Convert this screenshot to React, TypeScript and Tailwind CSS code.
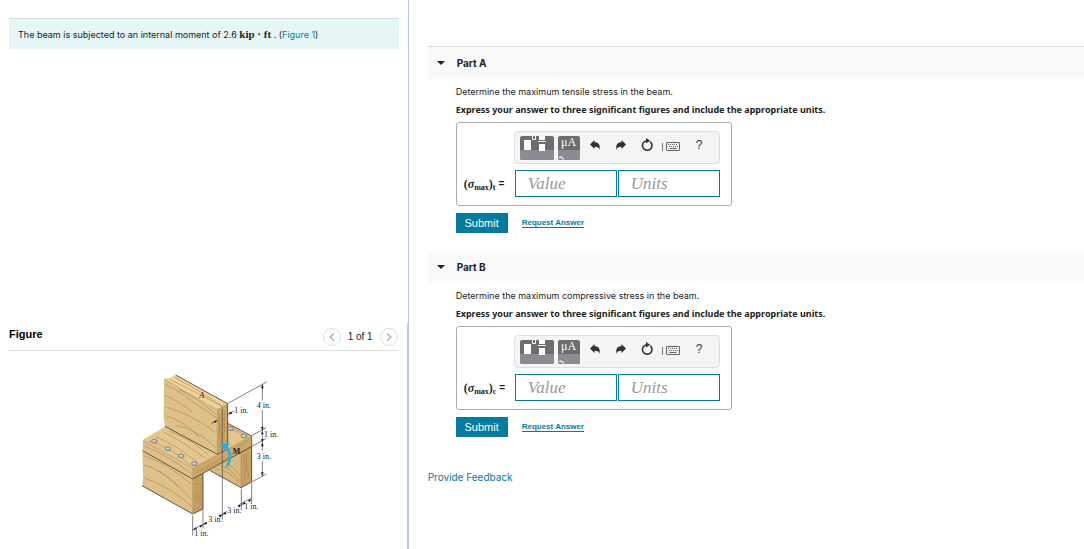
import React from "react";

const SERIF = "font-['Liberation_Serif','Noto_Serif',serif]";
const SANS = "font-['Liberation_Sans',Arial,sans-serif]";

interface PartProps {
  id: string;
  title: string;
  question: string;
  subscript: string; // t = tensile, c = compressive
  first?: boolean;
}

const UndoIcon = ({ flip = false }: { flip?: boolean }) => (
  <svg width="12" height="12" viewBox="0 0 12 12" className={flip ? "-scale-x-100" : ""}>
    <path d="M5.500 1v2.300c4 0 6 2.400 5 7.700-.3-2.400-1.800-3.300-5-3.300V10L1 5.500z" fill="#333" />
  </svg>
);

const ResetIcon = () => (
  <svg width="14" height="14" viewBox="0 0 14 14" fill="none">
    <path d="M10.200 3.700A4.800 4.800 0 1 1 6.500 2.700" stroke="#333" strokeWidth="1.600" />
    <path d="M6 0l4.200 2.700L6 5.500z" fill="#333" />
  </svg>
);

const KeyboardIcon = () => (
  <svg width="14" height="9" viewBox="0 0 14 9" fill="none">
    <rect x=".5" y=".5" width="13" height="8" rx=".5" fill="#eee" stroke="#666" />
    <path d="M2 2.500h10M3 4.500h9" stroke="#666" strokeDasharray="1 1" />
    <path d="M3.500 6.500h7" stroke="#666" />
  </svg>
);

const TemplatesIcon = () => (
  <svg width="34" height="24" viewBox="0 0 34 24">
    <rect width="34" height="24" rx="2" fill="#6d6d70" />
    <path d="M0 14h34v8a2 2 0 0 1-2 2H2a2 2 0 0 1-2-2z" fill="#8b8b93" />
    <rect x="4" y="4" width="7" height="10" fill="#fff" />
    <path d="M12.500 0v3.500h3V0" fill="none" stroke="#fff" />
    <rect x="19" y="0" width="6" height="4" fill="#fff" />
    <rect x="18" y="5" width="8" height="1" fill="#fff" />
    <rect x="19" y="8" width="6" height="7" fill="#fff" />
  </svg>
);

const SymbolsIcon = () => (
  <svg width="22" height="24" viewBox="0 0 22 24">
    <rect width="22" height="24" rx="2" fill="#6d6d70" />
    <path d="M0 14h22v8a2 2 0 0 1-2 2H2a2 2 0 0 1-2-2z" fill="#8b8b93" />
    <text x="3" y="10" fontSize="12" fill="#fff" fontFamily="Liberation Serif, serif">
      μA
    </text>
    <path d="M1 21.500q3-1.500 4.500 2" fill="none" stroke="#fff" strokeWidth="1.300" />
  </svg>
);

const Toolbar = () => (
  <div className="flex h-[33px] items-start rounded border border-[#ddd] bg-[#f4f4f4] px-[5px] pt-1">
    <button type="button" aria-label="Templates" className="mr-1">
      <TemplatesIcon />
    </button>
    <button type="button" aria-label="Symbols">
      <SymbolsIcon />
    </button>
    <div className="flex h-[18px] flex-1 items-center">
      <button type="button" aria-label="Undo" className="ml-[9px]">
        <UndoIcon />
      </button>
      <button type="button" aria-label="Redo" className="ml-[14px]">
        <UndoIcon flip />
      </button>
      <button type="button" aria-label="Reset" className="ml-[13px]">
        <ResetIcon />
      </button>
      <span className="ml-2 mt-[3px] h-2 w-px bg-[#777]" />
      <button type="button" aria-label="Keyboard shortcuts" className="ml-[3px] mt-[3px]">
        <KeyboardIcon />
      </button>
      <button
        type="button"
        aria-label="Help"
        className={`${SANS} ml-4 text-[12px] leading-4 text-[#333]`}
      >
        ?
      </button>
    </div>
  </div>
);

const Part: React.FC<PartProps> = ({ id, title, question, subscript, first }) => {
  return (
    <section className="mb-[18px]">
      <h2
        className={`flex h-8 items-center bg-[#f9f9f9] pl-[9px] text-[10px] font-bold ${
          first ? "box-content border-t border-[#ddd]" : ""
        }`}
      >
        <svg width="8" height="4" viewBox="0 0 8 4" className="mr-3">
          <path d="M0 0h8L4 4z" fill="#222" />
        </svg>
        {title}
      </h2>
      <div className="pl-7">
        <p className="pt-1 text-[9px] leading-[18px]">{question}</p>
        <p className="font-['Noto_Sans',sans-serif] text-[9px] font-bold leading-[18px]">
          Express your answer to three significant figures and include the appropriate units.
        </p>
        <div className="mt-[3px] grid w-[276px] grid-cols-[50px_206px] gap-y-1.5 rounded-[3px] border border-[#aaa] py-2 pl-[7px]">
          <div className="col-start-2">
            <Toolbar />
          </div>
          <label
            htmlFor={`${id}-value`}
            className="flex h-[27px] items-center whitespace-nowrap text-[11px]"
          >
            <span className={`${SERIF} text-[12px] font-bold`}>
              (<i>σ</i>
              <sub className="text-[8px]">max</sub>)
              <sub className="text-[8px]">{subscript}</sub>
            </span>
            <span className={`${SANS} ml-[3px] text-[10px] font-bold`}>=</span>
          </label>
          <div className="flex gap-px pl-px">
            <input
              id={`${id}-value`}
              placeholder="Value"
              className={`${SERIF} h-[27px] min-w-0 flex-1 border border-[#047a9c] bg-white px-3 text-[17px] italic placeholder:text-[#999]`}
            />
            <input
              aria-label="Units"
              placeholder="Units"
              className={`${SERIF} h-[27px] min-w-0 flex-1 border border-[#047a9c] bg-white px-3 text-[17px] italic placeholder:text-[#999]`}
            />
          </div>
        </div>
        <div className="mt-[7px] flex items-center">
          <button type="button" className={`${SANS} h-5 w-[52px] bg-[#047a9c] text-[11px] text-white`}>
            Submit
          </button>
          <a
            href="#"
            className={`${SANS} ml-[14px] border-b border-[#047a9c] text-[8px] font-bold leading-[9px] text-[#047a9c]`}
          >
            Request Answer
          </a>
        </div>
      </div>
    </section>
  );
};

const BOLTS = [[76, 244], [117, 266], [156, 288], [196, 311], [305, 206], [345, 228]];

const DIMENSIONS = [
  { x: 316, y: 160, label: "1 in." },
  { x: 383, y: 144, label: "4 in." },
  { x: 405, y: 230, label: "1 in." },
  { x: 383, y: 297, label: "3 in." },
  { x: 346, y: 446, label: "1 in." },
  { x: 295, y: 459, label: "3 in." },
  { x: 238, y: 487, label: "3 in." },
  { x: 196, y: 527, label: "1 in." },
];

const BeamFigure = () => (
  <svg
    width="160"
    height="189"
    viewBox="0 0 480 567"
    role="img"
    aria-label="Beam cross section"
    fontFamily="Liberation Serif, serif"
  >
    {/* right leg */}
    <path d="M242 331l94-54v106L242 331z" fill="#d8bb82" />
    <path d="M336 276l32-17v107l-32 17z" fill="#c4a064" />
    {/* flange */}
    <path d="M296 190l71 38-176 97L42 243v-4l68-40 156 83 30-17z" fill="#e2c88f" />
    <path d="M191 325l176-97v32L191 357z" fill="#cba86a" />
    <path d="M42 241l149 84v32L40 273z" fill="#ddc08a" />
    {/* left leg */}
    <path d="M40 273l151 84v105L39 377l3-22z" fill="#ddc08a" />
    <path d="M191 357l31-17v107l-31 15z" fill="#c4a064" />
    {/* web */}
    <path d="M105 58l160 91v134L108 199l-4-28z" fill="#ddc08a" />
    <path d="M105 58l8-4 8 1 19-10 156 86-31 18z" fill="#ead49f" />
    <path d="M265 149l31-18v135l-31 17z" fill="#c8a466" />
    {/* wood grain */}
    <g fill="none" stroke="#c07c4c" strokeWidth="2.500" opacity=".7">
      <path d="M110 74q60 28 90 60M150 88q55 25 110 75M108 106q48 20 83 52M190 125q40 25 72 48M108 140q80 22 152 78M110 167q50 12 100 63M140 197q60 8 120 66" />
      <path d="M122 58q80 38 160 83M135 51q70 35 145 88" />
      <path d="M60 243q70 20 125 74M80 230q60 25 125 76M104 216q60 30 125 78M120 213q75 30 119 72" />
      <path d="M46 258q75 30 142 84M45 288q70 22 142 85M44 315q60 14 102 65M84 332q52 28 104 87M46 354q80 28 142 85" />
      <path d="M258 326q40 2 74 43M275 318q30 6 57 44M292 310q30 17 40 36" />
      <path d="M300 199q34 16 57 32M309 208q25 12 40 28" />
    </g>
    <g fill="none" stroke="#a87a3e" strokeWidth="2" opacity=".7">
      <ellipse cx="207" cy="411" rx="10" ry="16" />
      <ellipse cx="207" cy="411" rx="4" ry="8" />
      <path d="M195 374q19-8 21 12M194 448q21-5 24-20" />
      <path d="M272 165q-3 48 3 108M288 154q-4 37 0 50" />
      <ellipse cx="280" cy="206" rx="8" ry="14" />
      <path d="M203 333q48-17 79-43M214 334q65-24 106-60M326 260q20-5 33-22" />
      <path d="M344 284q10 32 0 87M355 284q-10 32 6 66" />
    </g>
    {/* edges */}
    <g fill="none" stroke="#4a3a22" strokeWidth="2.500">
      <path d="M140 45l156 86v134M108 199l157 84 31-17M42 273l149 84 176-97M39 377l152 85 31-15V341M242 331l94 52 32-17V228l-72-38" />
      <path d="M105 58l160 91 31-18M265 149v134M42 242l149 83 176-97M191 325v137M336 277v106" stroke="#a17e45" strokeWidth="1.500" />
    </g>
    {BOLTS.map(([cx, cy]) => (
      <g key={`${cx}-${cy}`}>
        <ellipse cx={cx} cy={cy} rx="9" ry="6" fill="#aeb2ba" stroke="#777" strokeWidth="2" />
        <ellipse cx={cx - 1} cy={cy - 1} rx="4" ry="2" fill="#dfe3eb" />
      </g>
    ))}
    {/* dimension lines */}
    <g fill="none" stroke="#444" strokeWidth="2">
      <path d="M297 130l116-64M368 227l44-24M368 259l44-24M368 366l44-24M400 73v48M400 150v122M400 303v46M280 148v331M191 467v60M222 449v57M337 387v64M368 369v62M191 510l43-23M270 467l24-13M330 434l38-20M316 153l-22 11M246 191l19-10" />
    </g>
    <g fill="#222">
      <path d="M400 73l-4 12h8zM400 213l-4-12h8zM400 213l-4 10h8zM400 247l-4-10h8zM400 247l-4 12h8zM400 349l-4-12h8z" />
      <path d="M191 510l9-9 4 7zM222 494l-11 2 4 7zM222 494l9-9 4 7zM280 464l-11 2 4 7zM280 464l9-9 4 7zM337 434l-11 2 4 7zM337 434l9-9 4 7zM368 418l-11 2 4 7zM297 163l9-9 4 7zM265 181l-11 2 4 7z" />
    </g>
    {/* moment arrow */}
    <path d="M292 320q24-28-4-66" fill="none" stroke="#19b4f0" strokeWidth="7" />
    <path d="M276 248l27 5-18 16z" fill="#19b4f0" />
    <g fill="#222" fontSize="24">
      {DIMENSIONS.map((d) => (
        <text key={`${d.x}-${d.y}`} x={d.x} y={d.y}>
          {d.label}
        </text>
      ))}
      <text x="211" y="114" fontStyle="italic">A</text>
      <text x="311" y="281" fontWeight="bold">M</text>
    </g>
  </svg>
);

const App = () => {
  return (
    <div className="flex min-h-screen bg-white font-[Inter,'Liberation_Sans',sans-serif] text-[#222]">
      <aside className="flex w-[37.7%] shrink-0 flex-col">
        <div className="flex-1 border-r border-[#b8cadb] px-[9px] pt-[18px]">
          <p className="flex h-[31px] items-center border-t border-[#ddd] bg-[#e6f6f7] pl-[9px] text-[9px]">
            <span>
              The beam is subjected to an internal moment of 2.6{" "}
              <b className={`${SERIF} text-[11px]`}>kip · ft</b> . (
              <a href="#figure" className="text-[#047a9c]">
                Figure 1
              </a>
              )
            </span>
          </p>
        </div>
        <div id="figure" className="border-r-2 border-[#b8cadb] px-[9px]">
          <div className={`${SANS} flex h-7 items-center border-b border-[#ddd]`}>
            <h2 className="flex-1 pb-1 text-[11px] font-bold text-black">Figure</h2>
            <button
              type="button"
              aria-label="Previous figure"
              className="flex size-[18px] items-center justify-center rounded-full border border-[#ddd]"
            >
              <svg width="6" height="8" viewBox="0 0 6 8" fill="none">
                <path d="M5 .5L1 4l4 3.500" stroke="#aaa" strokeWidth="1.300" />
              </svg>
            </button>
            <span className="mx-[7px] text-[10px]">1 of 1</span>
            <button
              type="button"
              aria-label="Next figure"
              className="flex size-[18px] items-center justify-center rounded-full border border-[#ddd]"
            >
              <svg width="6" height="8" viewBox="0 0 6 8" fill="none">
                <path d="M1 .5L5 4 1 7.500" stroke="#aaa" strokeWidth="1.300" />
              </svg>
            </button>
          </div>
          <div className="flex justify-center pl-3 pt-[9px]">
            <BeamFigure />
          </div>
        </div>
      </aside>
      <main className="min-w-0 flex-1 pl-[19px] pt-[46px]">
        <Part
          id="part-a"
          title="Part A"
          question="Determine the maximum tensile stress in the beam."
          subscript="t"
          first
        />
        <Part
          id="part-b"
          title="Part B"
          question="Determine the maximum compressive stress in the beam."
          subscript="c"
        />
        <a href="#" className="mt-3.5 inline-block text-[10px] leading-4 text-[#047a9c]">
          Provide Feedback
        </a>
      </main>
    </div>
  );
};

export default App;
